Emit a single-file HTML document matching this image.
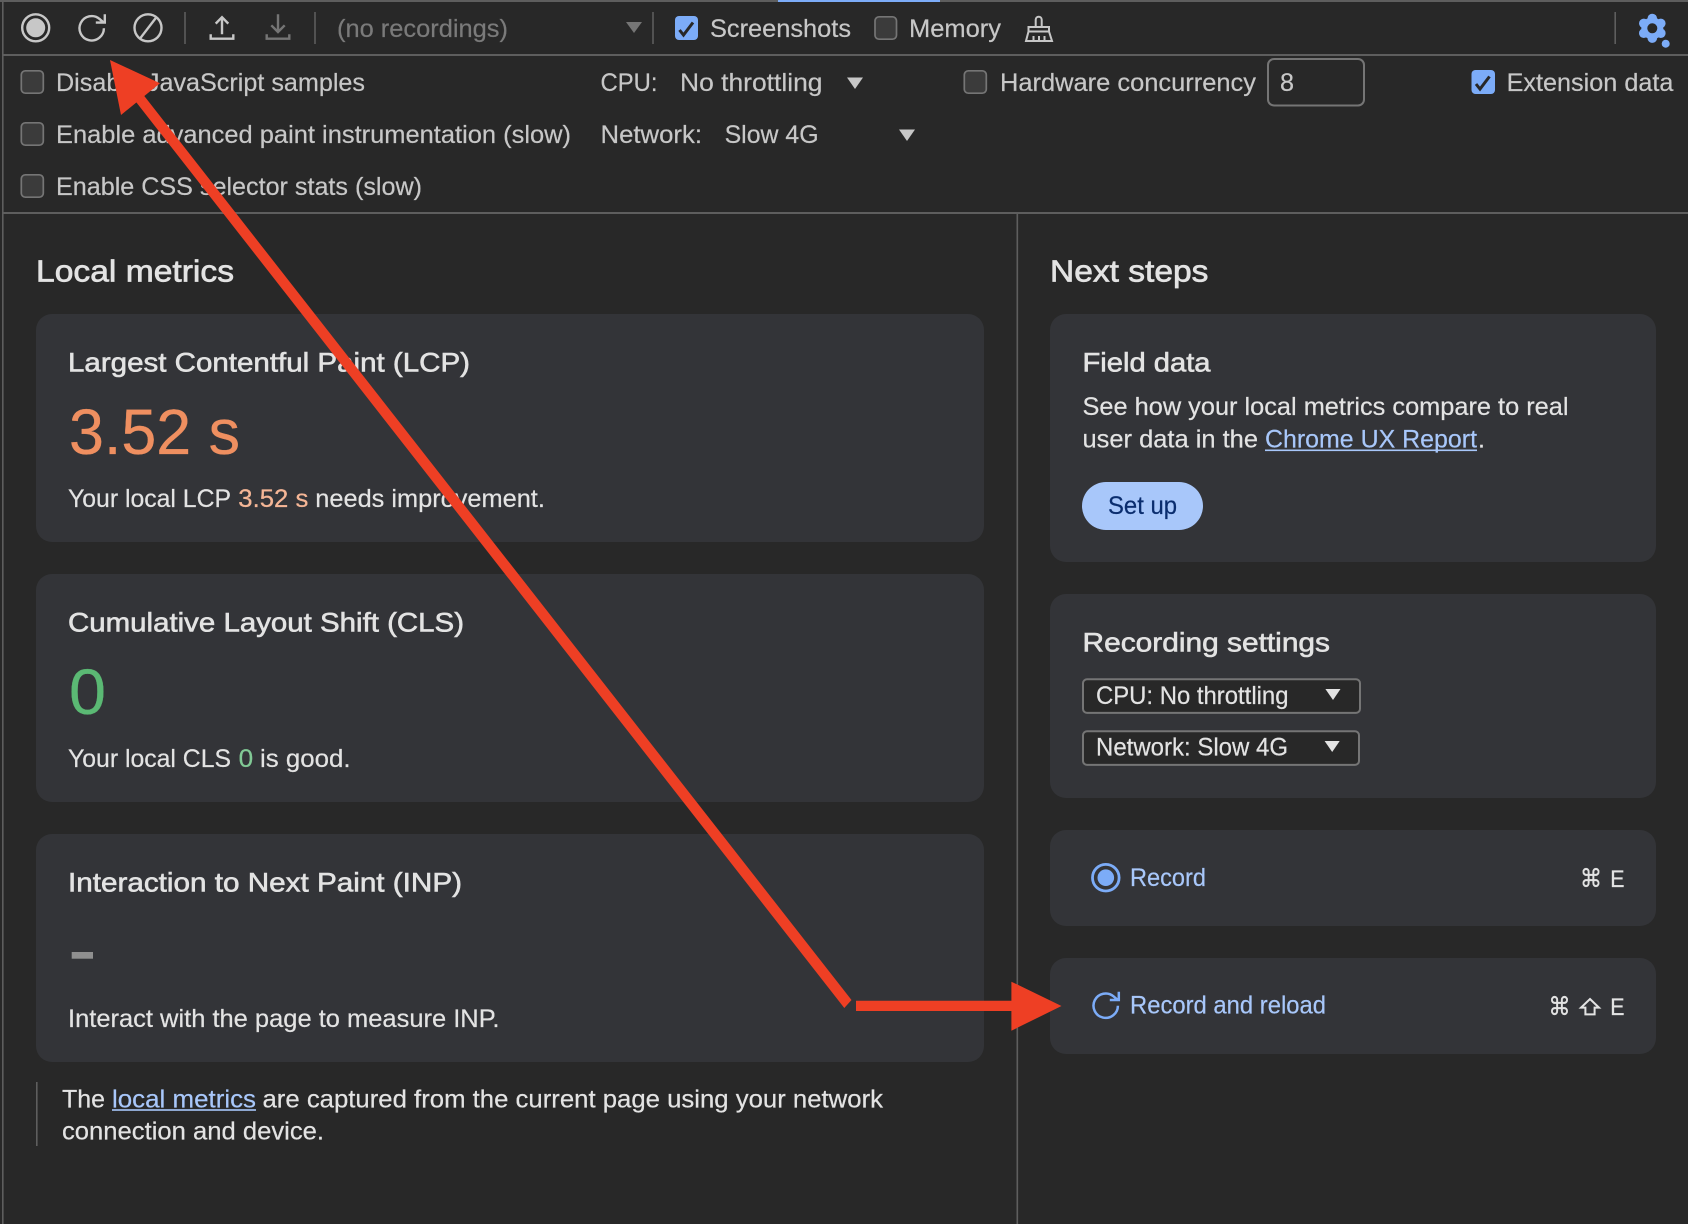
<!DOCTYPE html>
<html lang="en"><head><meta charset="utf-8"><title>Performance panel</title>
<style>
html,body{margin:0;padding:0;background:#282828;width:1688px;height:1224px;overflow:hidden}
svg{display:block}
text{font-family:"Liberation Sans",Arial,sans-serif;white-space:pre}
.t{font-size:25px;fill:#c7c7c7;stroke:#c7c7c7;stroke-width:.2px}
.b{font-size:25px;fill:#e3e3e3;stroke:#e3e3e3;stroke-width:.2px}
.h{font-size:27px;fill:#e3e3e3;stroke:#e3e3e3;stroke-width:.6px}
.h2{font-size:31px;fill:#e3e3e3;stroke:#e3e3e3;stroke-width:.7px}
.l{font-size:25px;fill:#a8c7fa;stroke:#a8c7fa;stroke-width:.2px}
.k{font-family:"DejaVu Sans","Liberation Sans",sans-serif;font-size:25px;fill:#e3e3e3;stroke:#e3e3e3;stroke-width:.3px}
.e{font-size:24px;fill:#e3e3e3;stroke:#e3e3e3;stroke-width:.3px}
.ic{fill:none;stroke:#c7c7c7;stroke-width:2.4}
.cb{fill:#3b3b3b;stroke:#757575;stroke-width:1.7}
.cc{fill:#7cacf8}
.ck{fill:none;stroke:#282828;stroke-width:3}
.card{fill:#333438}
</style></head>
<body>
<svg xmlns="http://www.w3.org/2000/svg" width="1688" height="1224" viewBox="0 0 1688 1224">
<rect width="1688" height="1224" fill="#282828"/>
<!-- frame -->
<rect x="0" y="0" width="1688" height="2" fill="#5e5e5e"/>
<rect x="778" y="0" width="162" height="2" fill="#7cacf8"/>
<rect x="2" y="0" width="1.6" height="1224" fill="#5e5e5e"/>
<rect x="2" y="54" width="1686" height="2" fill="#5e5e5e"/>
<rect x="2" y="212" width="1686" height="2" fill="#5e5e5e"/>
<rect x="1016.5" y="214" width="1.6" height="1010" fill="#5e5e5e"/>

<!-- toolbar icons -->
<circle cx="35.7" cy="27.8" r="13.5" class="ic"/><circle cx="35.7" cy="27.8" r="9.5" fill="#c7c7c7"/>
<path class="ic" d="M103.9 28.3A12.2 12.2 0 1 1 99.5 18.9L104.3 23M104.8 14.3V22.6H95.8"/>
<circle cx="148" cy="27.8" r="13.5" class="ic"/><path class="ic" d="M140.2 38.3L155.8 18"/>
<rect x="184.2" y="12" width="1.6" height="32" fill="#5e5e5e"/>
<path class="ic" d="M222 18V34.3M215.7 23.6L222 17.2L228.3 23.6M210.7 34.3V38.7H233.3V34.3"/>
<path class="ic" style="stroke:#757575" d="M278 14.3V31M271.3 25.3L278 32L284.7 25.3M266.7 34.3V38.7H289.3V34.3"/>
<rect x="314.2" y="12" width="1.6" height="32" fill="#5e5e5e"/>
<text x="337" y="37" class="t" style="fill:#7a7a7a;stroke:#7a7a7a" textLength="171" lengthAdjust="spacingAndGlyphs">(no recordings)</text>
<path d="M626 22H642L634 33Z" fill="#757575"/>
<rect x="652.2" y="12" width="1.6" height="32" fill="#5e5e5e"/>

<rect x="675" y="16" width="23" height="24" rx="4" class="cc"/><path class="ck" d="M679.5 30L683.5 35L693 22.5"/>
<text x="710" y="37" class="t" textLength="141" lengthAdjust="spacingAndGlyphs">Screenshots</text>
<rect x="875" y="16.8" width="21.5" height="22.4" rx="4" class="cb"/>
<text x="909" y="37" class="t" textLength="92" lengthAdjust="spacingAndGlyphs">Memory</text>
<path d="M1035.7 26.7V19.7a3 3 0 0 1 6 0V26.7M1028.5 27H1049V31.5H1028.5ZM1028.5 31.5L1026 41H1052L1049 31.5M1033.5 41V36M1039 41V36M1044.5 41V36" fill="none" stroke="#c7c7c7" stroke-width="2"/>
<rect x="1614.4" y="12" width="1.6" height="32" fill="#5e5e5e"/>
<!-- gear -->
<g fill="#7cacf8">
<circle cx="1652.3" cy="28.3" r="11"/>
<circle cx="1652.3" cy="18.5" r="4.8"/><circle cx="1652.3" cy="38.1" r="4.8"/>
<circle cx="1643.8" cy="23.4" r="4.8"/><circle cx="1660.8" cy="23.4" r="4.8"/>
<circle cx="1643.8" cy="33.2" r="4.8"/><circle cx="1660.8" cy="33.2" r="4.8"/>
<circle cx="1665.7" cy="43.7" r="4"/>
</g>
<circle cx="1652.3" cy="28.3" r="5" fill="#282828"/>

<!-- settings rows -->
<rect x="21.3" y="70.8" width="22" height="22.4" rx="4" class="cb"/>
<rect x="21.3" y="122.8" width="22" height="22.4" rx="4" class="cb"/>
<rect x="21.3" y="174.8" width="22" height="22.4" rx="4" class="cb"/>
<text x="56" y="91.2" class="t" textLength="309" lengthAdjust="spacingAndGlyphs">Disable JavaScript samples</text>
<text x="56" y="143.2" class="t" textLength="515" lengthAdjust="spacingAndGlyphs">Enable advanced paint instrumentation (slow)</text>
<text x="56" y="195.2" class="t" textLength="366" lengthAdjust="spacingAndGlyphs">Enable CSS selector stats (slow)</text>
<text x="600.5" y="91.2" class="t" textLength="57" lengthAdjust="spacingAndGlyphs">CPU:</text>
<text x="680" y="91.2" class="t" textLength="142.5" lengthAdjust="spacingAndGlyphs">No throttling</text>
<path d="M847 77.5H863L855 89Z" fill="#c7c7c7"/>
<text x="600.5" y="143.2" class="t" textLength="101.5" lengthAdjust="spacingAndGlyphs">Network:</text>
<text x="724.6" y="143.2" class="t" textLength="94" lengthAdjust="spacingAndGlyphs">Slow 4G</text>
<path d="M899 129.5H915L907 141Z" fill="#c7c7c7"/>
<rect x="964.3" y="70.8" width="22" height="22.4" rx="4" class="cb"/>
<text x="1000" y="91.2" class="t" textLength="256" lengthAdjust="spacingAndGlyphs">Hardware concurrency</text>
<rect x="1268" y="59" width="96" height="46.5" rx="6" fill="none" stroke="#757575" stroke-width="2"/>
<text x="1280" y="91.2" class="t" textLength="14" lengthAdjust="spacingAndGlyphs">8</text>
<rect x="1471.5" y="70" width="23.5" height="24" rx="4" class="cc"/><path class="ck" d="M1476 84L1480 89L1489.5 76.5"/>
<text x="1506.6" y="91.2" class="t" textLength="166.8" lengthAdjust="spacingAndGlyphs">Extension data</text>

<!-- headings -->
<text x="36" y="281.3" class="h2" textLength="198" lengthAdjust="spacingAndGlyphs">Local metrics</text>
<text x="1050" y="281.3" class="h2" textLength="158.4" lengthAdjust="spacingAndGlyphs">Next steps</text>

<!-- left cards -->
<rect x="36" y="314" width="948" height="228" rx="16" class="card"/>
<rect x="36" y="574" width="948" height="228" rx="16" class="card"/>
<rect x="36" y="834" width="948" height="228" rx="16" class="card"/>

<text x="68" y="371.7" class="h" textLength="402" lengthAdjust="spacingAndGlyphs">Largest Contentful Paint (LCP)</text>
<text x="69" y="454" font-size="64" fill="#ef8f60" stroke="#ef8f60" stroke-width=".3" textLength="171" lengthAdjust="spacingAndGlyphs">3.52 s</text>
<text x="68" y="507.2" class="b" textLength="163" lengthAdjust="spacingAndGlyphs">Your local LCP</text>
<text x="238.3" y="507.2" font-size="25" fill="#f5b696" stroke="#f5b696" stroke-width=".25" textLength="70" lengthAdjust="spacingAndGlyphs">3.52 s</text>
<text x="315.3" y="507.2" class="b" textLength="229.6" lengthAdjust="spacingAndGlyphs">needs improvement.</text>

<text x="68" y="631.7" class="h" textLength="396" lengthAdjust="spacingAndGlyphs">Cumulative Layout Shift (CLS)</text>
<text x="69" y="714" font-size="64" fill="#5bb974" stroke="#5bb974" stroke-width=".3" textLength="37" lengthAdjust="spacingAndGlyphs">0</text>
<text x="68" y="767.2" class="b" textLength="163" lengthAdjust="spacingAndGlyphs">Your local CLS</text>
<text x="238.7" y="767.2" font-size="25" fill="#81c995" stroke="#81c995" stroke-width=".25" textLength="14.5" lengthAdjust="spacingAndGlyphs">0</text>
<text x="260" y="767.2" class="b" textLength="90.5" lengthAdjust="spacingAndGlyphs">is good.</text>

<text x="68" y="891.7" class="h" textLength="394" lengthAdjust="spacingAndGlyphs">Interaction to Next Paint (INP)</text>
<rect x="71.7" y="952" width="21.3" height="6.7" fill="#8f8f8f"/>
<text x="68" y="1027.2" class="b" textLength="431.5" lengthAdjust="spacingAndGlyphs">Interact with the page to measure INP.</text>

<!-- footnote -->
<rect x="36" y="1082" width="1.6" height="64" fill="#5e5e5e"/>
<text x="62" y="1107.3" class="b" textLength="43" lengthAdjust="spacingAndGlyphs">The</text>
<text x="112" y="1107.3" class="l" textLength="144" lengthAdjust="spacingAndGlyphs">local metrics</text>
<rect x="112" y="1109.2" width="144" height="1.6" fill="#a8c7fa"/>
<text x="262.5" y="1107.3" class="b" textLength="620.5" lengthAdjust="spacingAndGlyphs">are captured from the current page using your network</text>
<text x="62" y="1139.3" class="b" textLength="262" lengthAdjust="spacingAndGlyphs">connection and device.</text>

<!-- right cards -->
<rect x="1050" y="314" width="606" height="248" rx="16" class="card"/>
<rect x="1050" y="594" width="606" height="204" rx="16" class="card"/>
<rect x="1050" y="830" width="606" height="96" rx="16" class="card"/>
<rect x="1050" y="958" width="606" height="96" rx="16" class="card"/>

<text x="1082.5" y="371.7" class="h" textLength="128" lengthAdjust="spacingAndGlyphs">Field data</text>
<text x="1082.5" y="415" class="b" textLength="486" lengthAdjust="spacingAndGlyphs">See how your local metrics compare to real</text>
<text x="1082.5" y="447.3" class="b" textLength="175.5" lengthAdjust="spacingAndGlyphs">user data in the</text>
<text x="1265" y="447.3" class="l" textLength="212" lengthAdjust="spacingAndGlyphs">Chrome UX Report</text>
<rect x="1265" y="449.5" width="212" height="1.6" fill="#a8c7fa"/>
<text x="1478" y="447.3" class="b">.</text>
<rect x="1082" y="482" width="121" height="48" rx="24" fill="#a8c7fa"/>
<text x="1108" y="514" font-size="25" fill="#0a2d6e" stroke="#0a2d6e" stroke-width=".2" textLength="69" lengthAdjust="spacingAndGlyphs">Set up</text>

<text x="1082.5" y="651.7" class="h" textLength="247.5" lengthAdjust="spacingAndGlyphs">Recording settings</text>
<rect x="1083" y="679.3" width="277" height="33.6" rx="4" fill="#282828" stroke="#757575" stroke-width="2"/>
<text x="1096" y="704" class="b" textLength="192.5" lengthAdjust="spacingAndGlyphs">CPU: No throttling</text>
<path d="M1325.4 689H1340.5L1333 700Z" fill="#e3e3e3"/>
<rect x="1083" y="731.3" width="276" height="33.6" rx="4" fill="#282828" stroke="#757575" stroke-width="2"/>
<text x="1096" y="755.7" class="b" textLength="192" lengthAdjust="spacingAndGlyphs">Network: Slow 4G</text>
<path d="M1324.6 741H1339.7L1332.2 752Z" fill="#e3e3e3"/>

<circle cx="1105.8" cy="877.7" r="13.3" fill="none" stroke="#7cacf8" stroke-width="2.8"/>
<circle cx="1105.8" cy="877.7" r="8.3" fill="#7cacf8"/>
<text x="1130" y="885.9" class="l" textLength="76" lengthAdjust="spacingAndGlyphs">Record</text>
<text x="1580" y="887" class="k" textLength="22" lengthAdjust="spacingAndGlyphs">⌘</text>
<text x="1610.2" y="887" class="e" textLength="14.2" lengthAdjust="spacingAndGlyphs">E</text>

<path transform="translate(1014 977.4)" fill="none" stroke="#7cacf8" stroke-width="2.5" d="M103.9 28.3A12.2 12.2 0 1 1 99.5 18.9L104.3 23M104.8 14.3V22.6H95.8"/>
<text x="1130" y="1013.5" class="l" textLength="196" lengthAdjust="spacingAndGlyphs">Record and reload</text>
<text x="1548.5" y="1015" class="k" textLength="22" lengthAdjust="spacingAndGlyphs">⌘</text>
<path d="M1590 999L1599 1007.6H1594.6V1014.4H1585.4V1007.6H1581Z" fill="none" stroke="#e3e3e3" stroke-width="2"/>
<text x="1610.2" y="1015" class="e" textLength="14.2" lengthAdjust="spacingAndGlyphs">E</text>

<!-- red annotation arrows -->
<path d="M143.5 95L851.5 1000L844.3 1008L130.6 95Z" fill="#ee3f24"/>
<path d="M110 60L160 83.3L121 115Z" fill="#ee3f24"/>
<path d="M856 1000.7H1011.4V981.7L1061.5 1006L1011.4 1030.7V1011H856Z" fill="#ee3f24"/>
</svg>
</body></html>
